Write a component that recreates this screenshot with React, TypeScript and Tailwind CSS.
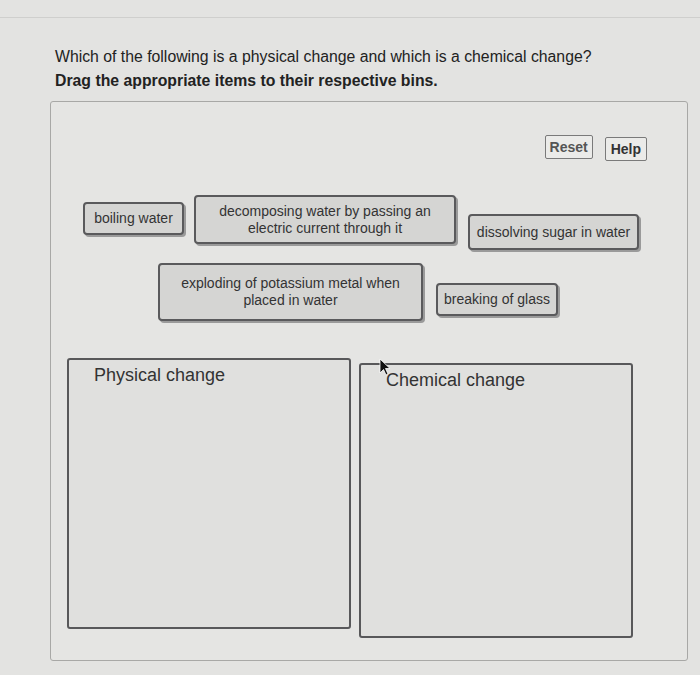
import React from "react";

const font = { fontFamily: '"Liberation Sans", Arial, sans-serif' };

function Item({ children, className = "" }: { children: React.ReactNode; className?: string }) {
  return (
    <div
      className={
        "flex items-center justify-center whitespace-nowrap rounded-[4px] border-2 border-[#5a5a5c] bg-[#d5d5d3] px-1 text-center text-[14px] leading-[17px] text-[#333] shadow-[2px_2px_0_#9a9a9a] " +
        className
      }
    >
      {children}
    </div>
  );
}

function Bin({ label, className = "" }: { label: string; className?: string }) {
  return (
    <div className={"rounded-[3px] border-2 border-[#58585a] bg-[#e0e0de] " + className}>
      <div className="px-[25px] pt-[2px] text-[18px] text-[#333]">{label}</div>
    </div>
  );
}

export default function App() {
  return (
    <div className="relative h-[675px] w-[700px] overflow-hidden bg-[#e3e3e1] text-[#222]" style={font}>
      <div className="h-[18px] border-b border-[#cfcfcd]" />
      <div className="pl-[55px] pt-[29px]">
        <p className="text-[15.8px] leading-[20px] text-[#222]">
          Which of the following is a physical change and which is a chemical change?
        </p>
        <p className="mt-[4px] text-[15.8px] font-bold leading-[20px] text-[#222]">
          Drag the appropriate items to their respective bins.
        </p>
      </div>

      <div className="ml-[50px] mt-[10px] h-[560px] w-[638px] rounded-[3px] border border-[#a8a8a6] bg-[#e5e5e3]">
        <div className="flex justify-end gap-[12px] pr-[40px] pt-[33px]">
          <button className="h-[24px] rounded-[2px] border border-[#7a7a7a] bg-[#ebebe9] px-[4px] text-[14px] font-bold text-[#555]">
            Reset
          </button>
          <button className="mt-[2px] h-[24px] rounded-[2px] border border-[#7a7a7a] bg-[#ebebe9] px-[5px] text-[14px] font-bold text-[#333]">
            Help
          </button>
        </div>

        <div className="mt-[34px] flex items-start pl-[32px]">
          <Item className="mt-[7px] h-[33px] w-[101px]">boiling water</Item>
          <Item className="ml-[10px] h-[49px] w-[262px]">
            decomposing water by passing an
            <br />
            electric current through it
          </Item>
          <Item className="ml-[12px] mt-[19px] h-[36px] w-[171px]">dissolving sugar in water</Item>
        </div>

        <div className="mt-[13px] flex items-start pl-[107px]">
          <Item className="h-[58px] w-[265px]">
            exploding of potassium metal when
            <br />
            placed in water
          </Item>
          <Item className="ml-[13px] mt-[20px] h-[33px] w-[122px]">breaking of glass</Item>
        </div>

        <div className="mt-[37px] flex items-start pl-[16px]">
          <Bin label="Physical change" className="h-[271px] w-[284px]" />
          <Bin label="Chemical change" className="ml-[8px] mt-[5px] h-[275px] w-[274px]" />
        </div>
      </div>

      <svg className="absolute left-[379px] top-[358px]" width="12" height="18" viewBox="0 0 12 18">
        <path d="M1 1 L1 15 L4.5 11.5 L7 17 L9 16 L6.5 10.5 L11 10.5 Z" fill="#111" stroke="#fff" strokeWidth="0.8" />
      </svg>
    </div>
  );
}
